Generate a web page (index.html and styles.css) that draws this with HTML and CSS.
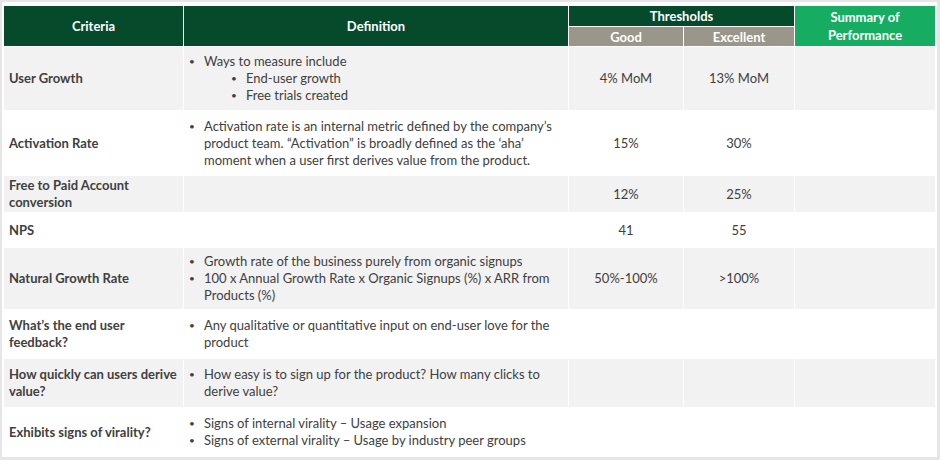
FILE: index.html
```html
<!DOCTYPE html>
<html>
<head>
<meta charset="utf-8">
<link rel="stylesheet" href="styles.css">
</head>
<body>
<div class="frame">
<table class="grid">
  <colgroup>
    <col class="c-crit"><col class="c-def"><col class="c-good"><col class="c-exc"><col class="c-sum">
  </colgroup>
  <thead>
    <tr class="h1">
      <th rowspan="2" class="dark">Criteria</th>
      <th rowspan="2" class="dark">Definition</th>
      <th colspan="2" class="dark thr">Thresholds</th>
      <th rowspan="2" class="bright">Summary of<br>Performance</th>
    </tr>
    <tr class="h2">
      <th class="grey">Good</th>
      <th class="grey">Excellent</th>
    </tr>
  </thead>
  <tbody>
    <tr class="alt r1">
      <td class="crit">User Growth</td>
      <td class="def">
        <ul class="bl"><li>Ways to measure include
          <ul class="sub"><li>End-user growth</li><li>Free trials created</li></ul>
        </li></ul>
      </td>
      <td class="num">4% MoM</td><td class="num">13% MoM</td><td></td>
    </tr>
    <tr class="r2">
      <td class="crit">Activation Rate</td>
      <td class="def"><ul class="bl"><li>Activation rate is an internal metric defined by the company’s product team. “Activation” is broadly defined as the ‘aha’ moment when a user first derives value from the product.</li></ul></td>
      <td class="num">15%</td><td class="num">30%</td><td></td>
    </tr>
    <tr class="alt r3">
      <td class="crit">Free to Paid Account conversion</td>
      <td class="def"></td>
      <td class="num">12%</td><td class="num">25%</td><td></td>
    </tr>
    <tr class="r4">
      <td class="crit">NPS</td>
      <td class="def"></td>
      <td class="num">41</td><td class="num">55</td><td></td>
    </tr>
    <tr class="alt r5">
      <td class="crit">Natural Growth Rate</td>
      <td class="def"><ul class="bl"><li>Growth rate of the business purely from organic signups</li><li>100 x Annual Growth Rate x Organic Signups (%) x ARR from Products (%)</li></ul></td>
      <td class="num">50%-100%</td><td class="num">&gt;100%</td><td></td>
    </tr>
    <tr class="r6">
      <td class="crit">What’s the end user feedback?</td>
      <td class="def"><ul class="bl"><li>Any qualitative or quantitative input on end-user love for the product</li></ul></td>
      <td></td><td></td><td></td>
    </tr>
    <tr class="alt r7">
      <td class="crit">How quickly can users derive value?</td>
      <td class="def"><ul class="bl"><li>How easy is to sign up for the product? How many clicks to derive value?</li></ul></td>
      <td></td><td></td><td></td>
    </tr>
    <tr class="r8">
      <td class="crit">Exhibits signs of virality?</td>
      <td class="def"><ul class="bl"><li>Signs of internal virality – Usage expansion</li><li>Signs of external virality – Usage by industry peer groups</li></ul></td>
      <td></td><td></td><td></td>
    </tr>
  </tbody>
</table>
</div>
</body>
</html>
```
FILE: styles.css
```css
* { box-sizing: border-box; }
html, body { margin: 0; padding: 0; background: #fff; }
body {
  font-family: Lato, "Liberation Sans", sans-serif;
  font-size: 13px;
  color: #404040;
}
.frame {
  width: 940px;
  height: 460px;
  border-style: solid;
  border-color: #e6e6e6;
  border-width: 2px 3px 3px 2px;
  padding: 3px 2px 1px 1px;
  overflow: hidden;
}
.grid {
  width: 932px;
  table-layout: fixed;
  border-collapse: collapse;
  border-right: 1px solid #e0e0e0;
}
.c-crit { width: 180px; }
.c-def { width: 385px; }
.c-good { width: 115px; }
.c-exc { width: 111px; }
.c-sum { width: 141px; }

.grid th, .grid td {
  border: 1px solid #fff;
  padding: 0;
  vertical-align: middle;
  line-height: 17px;
}
.grid th {
  color: #fff;
  font-weight: 700;
  text-align: center;
  line-height: 18px;
}
.dark { background: #064a2c; }
.bright { background: #16ad63; }
.grey { background: #9a968a; }
.h1 th { height: 21px; }
.h2 th { height: 20px; }
.grid th.thr { line-height: 19px; }

.alt td { background: #f2f2f2; }
.crit { font-weight: 700; padding-left: 5px !important; padding-right: 2px !important; }
.num { text-align: center; }

.r1 td { height: 64px; }
.r2 td { height: 65px; }
.r3 td { height: 37px; }
.r4 td { height: 35px; }
.r5 td { height: 62px; }
.r6 td { height: 49px; }
.r7 td { height: 49px; }
.r8 td { height: 49px; }

.bl {
  list-style: none;
  margin: 0;
  padding: 0 8px 0 20px;
}
.bl li { position: relative; }
.bl li::before {
  content: "•";
  position: absolute;
  left: -15px;
  top: 0;
  font-size: 10px;
}
.sub {
  list-style: none;
  margin: 0;
  padding: 0 0 0 42px;
}
```
